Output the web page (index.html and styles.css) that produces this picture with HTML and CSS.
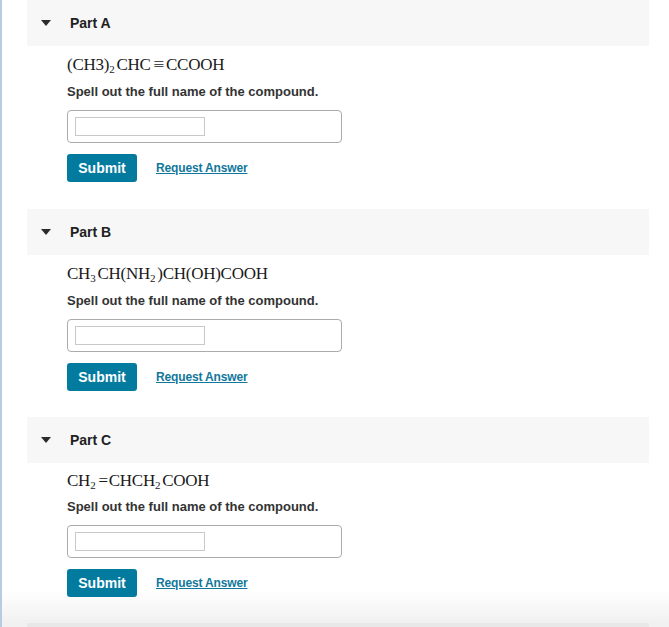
FILE: index.html
```html
<!DOCTYPE html>
<html lang="en">
<head>
<meta charset="utf-8">
<title>Parts</title>
<link rel="stylesheet" href="styles.css">
</head>
<body>
<div class="page">
  <main class="parts">
    <section class="part">
      <div class="part-header"><span class="caret"></span><span class="part-title">Part A</span></div>
      <div class="part-body">
        <div class="formula">(CH3)<sub>2</sub><span class="gap"></span>CHC<span class="bond bond-wide">≡</span>CCOOH</div>
        <p class="prompt">Spell out the full name of the compound.</p>
        <div class="answer-box"><input class="answer-input" type="text" aria-label="Answer"></div>
        <div class="actions"><button class="submit" type="button">Submit</button><a class="request" href="#">Request Answer</a></div>
      </div>
    </section>
    <section class="part">
      <div class="part-header"><span class="caret"></span><span class="part-title">Part B</span></div>
      <div class="part-body">
        <div class="formula">CH<sub>3</sub><span class="gap"></span>CH(NH<sub>2</sub><span class="gap"></span>)CH(OH)COOH</div>
        <p class="prompt">Spell out the full name of the compound.</p>
        <div class="answer-box"><input class="answer-input" type="text" aria-label="Answer"></div>
        <div class="actions"><button class="submit" type="button">Submit</button><a class="request" href="#">Request Answer</a></div>
      </div>
    </section>
    <section class="part">
      <div class="part-header"><span class="caret"></span><span class="part-title">Part C</span></div>
      <div class="part-body">
        <div class="formula formula-flat">CH<sub>2</sub><span class="gap"></span><span class="bond">=</span>CHCH<sub>2</sub><span class="gap"></span>COOH</div>
        <p class="prompt">Spell out the full name of the compound.</p>
        <div class="answer-box"><input class="answer-input" type="text" aria-label="Answer"></div>
        <div class="actions"><button class="submit" type="button">Submit</button><a class="request" href="#">Request Answer</a></div>
      </div>
    </section>
  </main>
  <div class="footer-bar"></div>
</div>
</body>
</html>
```

FILE: styles.css
```css
html, body {
  margin: 0;
  padding: 0;
  background: #ffffff;
}

body {
  font-family: "Liberation Sans", Arial, sans-serif;
  color: #222;
  overflow: hidden;
}

.page {
  height: 627px;
  box-sizing: border-box;
  border-left: 2px solid #b8cce0;
  display: flex;
  flex-direction: column;
  background: linear-gradient(to bottom, #ffffff 0, #ffffff 590px, #f1f1f1 622px, #f1f1f1 100%);
}

.parts {
  padding: 0 20px 0 25px;
}

.part {
  margin-bottom: 26px;
}

.part:first-child {
  margin-bottom: 27px;
}

.part-header {
  height: 46px;
  background: #f7f7f7;
  display: flex;
  align-items: center;
}

.caret {
  width: 0;
  height: 0;
  margin-left: 14px;
  margin-right: 19px;
  border-left: 5px solid transparent;
  border-right: 5px solid transparent;
  border-top: 6px solid #2b2b2b;
}

.part-title {
  font-weight: bold;
  font-size: 14px;
  color: #1f1f1f;
}

.part-body {
  padding-left: 40px;
}

.formula {
  margin-top: 8px;
  font-family: "Liberation Serif", "Times New Roman", serif;
  font-size: 17px;
  line-height: 22px;
  height: 22px;
  letter-spacing: -0.25px;
  color: #1a1a1a;
  white-space: nowrap;
}

.formula-flat {
  height: 20px;
  line-height: 20px;
}

.formula sub {
  font-size: 11px;
  line-height: 0;
  vertical-align: -3px;
}

.gap {
  display: inline-block;
  width: 2px;
}

.bond {
  display: inline-block;
  margin: 0 1px;
}

.bond-wide {
  margin: 0 3px;
  transform: scaleX(1.15);
}

.prompt {
  margin: 8px 0 0;
  font-size: 13px;
  line-height: 16px;
  font-weight: bold;
  color: #333;
}

.answer-box {
  margin-top: 10px;
  width: 275px;
  height: 33px;
  box-sizing: border-box;
  border: 1px solid #ababab;
  border-radius: 4px;
  padding: 6px 7px;
  background: #fff;
}

.answer-input {
  display: block;
  width: 130px;
  height: 19px;
  box-sizing: border-box;
  margin: 0;
  padding: 0;
  border: 1px solid #c9c9c9;
  background: #fff;
  outline: none;
}

.actions {
  margin-top: 11px;
  display: flex;
  align-items: center;
}

.submit {
  width: 70px;
  height: 28px;
  border: none;
  border-radius: 3px;
  background: #027b9f;
  color: #fff;
  font-family: "Liberation Sans", Arial, sans-serif;
  font-weight: bold;
  font-size: 14px;
  padding: 0;
  cursor: pointer;
}

.request {
  margin-left: 19px;
  font-size: 12px;
  font-weight: bold;
  letter-spacing: -0.15px;
  color: #11789c;
  text-decoration: underline;
  margin-top: -1px;
}

.footer-bar {
  margin: auto 20px 0 25px;
  height: 5px;
  background: #e8e8e8;
}
```
